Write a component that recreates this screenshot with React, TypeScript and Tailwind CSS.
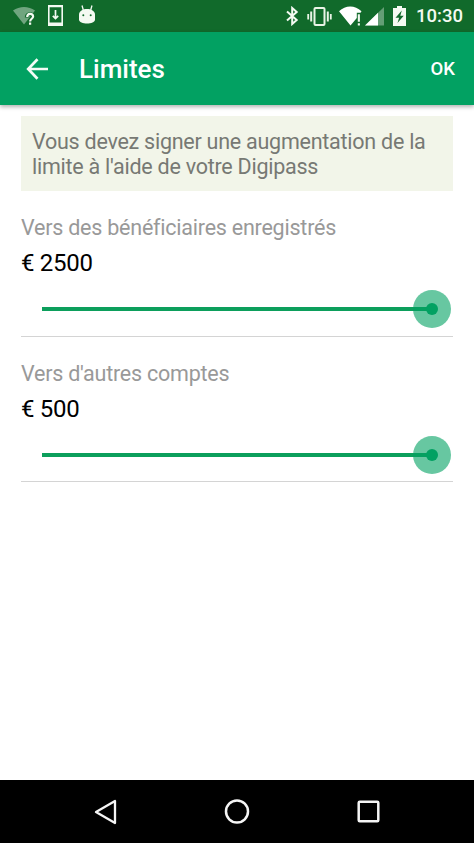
import React from "react";

const WifiUnknownIcon: React.FC = () => (
  <svg width="23" height="22" viewBox="0 0 23 22" fill="none">
    <path d="M0 5.5C6.500.8 15.500.8 22 5.500L11 19.500Z" fill="#fff" fillOpacity=".4" />
    <path
      d="M13.800 12.500c0-4.200 6.500-4.200 6.500-.8 0 2.300-3.100 2.500-3.100 5v3"
      stroke="#12692c"
      strokeWidth="4"
    />
    <path
      d="M14.200 12c0-4 5.900-4 5.900-.6 0 2.300-3 2.400-3 5M17.100 17.500v2.300"
      stroke="#f4faf2"
      strokeWidth="2.200"
    />
  </svg>
);

const DownloadIcon: React.FC = () => (
  <svg width="15" height="22" viewBox="0 0 15 22" fill="none">
    <path
      d="M0 0h15v21H0ZM1.600 2.200v15.200h11.800V2.200Z"
      fill="#f4faf2"
      fillRule="evenodd"
    />
    <path d="M7.500 5v8M4.800 10.800l2.700 2.700 2.700-2.700" stroke="#f4faf2" strokeWidth="1.700" />
  </svg>
);

const BotIcon: React.FC = () => (
  <svg width="16" height="20" viewBox="0 0 16 20" fill="none">
    <path d="M3 .5 4.300 5M13 .5 11.700 5" stroke="#f4faf2" strokeWidth="1.300" />
    <path
      d="M0 9.500C0 2 16 2 16 9.500V14.500c0 5.300-16 5.300-16 0Z"
      fill="#f4faf2"
    />
    <circle cx="4.300" cy="10.300" r="1" fill="#12692c" />
    <circle cx="11.700" cy="10.300" r="1" fill="#12692c" />
  </svg>
);

const BluetoothIcon: React.FC = () => (
  <svg width="13" height="20" viewBox="0 0 13 20" fill="none">
    <path
      d="M1 5.500 10.700 14 6.200 18V2l4.500 4L1 14.500"
      stroke="#f4faf2"
      strokeWidth="2"
    />
  </svg>
);

const VibrateIcon: React.FC = () => (
  <svg width="25" height="19" viewBox="0 0 25 19" fill="none" stroke="#e9f4e6">
    <rect x="7.500" y="1" width="10" height="17" rx="1" strokeWidth="2" />
    <path d="M4.200 4.500v10M20.800 4.500v10" strokeWidth="2" />
    <path d="M1.200 7v5.500M23.800 7v5.500" strokeWidth="1.800" />
  </svg>
);

const WifiAlertIcon: React.FC = () => (
  <svg width="23" height="20" viewBox="0 0 23 20">
    <path
      d="M0 5.300C6.500-1 16-1 22.500 5.300L21.500 6.800H17.800V12L11.500 19.500Z"
      fill="#fff"
    />
    <path d="M18.800 8.300h2.100v7.500h-2.100zM18.800 17.200h2.100v2.200h-2.100z" fill="#f4faf2" />
  </svg>
);

const SignalIcon: React.FC = () => (
  <svg width="19" height="19" viewBox="0 0 19 19">
    <path d="M0 18.500 19 0v18.500Z" fill="#fff" fillOpacity=".35" />
    <path d="M0 18.500 13 5.800v12.700Z" fill="#fff" />
  </svg>
);

const BatteryIcon: React.FC = () => (
  <svg width="13" height="20" viewBox="0 0 13 20">
    <path d="M4 0h5v2h4v18H0V2h4Z" fill="#f4faf2" />
    <path d="M8.800 4.500 2.500 11.800h3.600l-1.600 5.200L10.700 9.700H7.300Z" fill="#12692c" />
  </svg>
);

const StatusBar: React.FC = () => (
  <div className="flex h-8 items-start bg-[#116a2b] pr-[11px] pl-[13px] text-[#f4faf2]">
    <div className="flex flex-1 items-start pt-[5px]">
      <WifiUnknownIcon />
      <div className="ml-3">
        <DownloadIcon />
      </div>
      <div className="ml-4">
        <BotIcon />
      </div>
    </div>
    <div className="flex items-center pt-1.5">
      <BluetoothIcon />
      <div className="ml-2">
        <VibrateIcon />
      </div>
      <div className="ml-[7px]">
        <WifiAlertIcon />
      </div>
      <div className="ml-[3px]">
        <SignalIcon />
      </div>
      <div className="ml-[9px]">
        <BatteryIcon />
      </div>
      <span className="ml-2.5 w-[47px] text-[18.500px] leading-5 font-medium whitespace-nowrap">
        10:30
      </span>
    </div>
  </div>
);

const Header: React.FC = () => (
  <header className="z-10 flex h-[73px] items-center bg-[#02a162] pr-[19px] pl-[26px] text-white shadow-[0_2px_4px_rgba(0,0,0,0.3)]">
    <button aria-label="Retour">
      <svg width="22" height="22" viewBox="0 0 22 22" fill="none">
        <path d="M11.500 1.200 2.200 11l9.300 9.800M2.500 11H22" stroke="#f4fcf6" strokeWidth="2.700" />
      </svg>
    </button>
    <h1 className="ml-[31px] flex-1 pt-0.5 text-[26px] font-medium">Limites</h1>
    <button className="pt-0.5 text-[18.500px] font-medium">OK</button>
  </header>
);

interface LimitProps {
  label: string;
  amount: number;
}

const Limit: React.FC<LimitProps> = ({ label, amount }) => (
  <section className="mb-6 h-[121.500px] border-b border-[#d4d4d4]">
    <h2 className="text-[21.500px] leading-[25px] tracking-[-0.23px] text-[#999]">{label}</h2>
    <p className="mt-[9px] text-[24px] leading-7 tracking-[-0.3px] text-black">€ {amount}</p>
    <div className="mt-[13px] mr-0.5 ml-[21px] flex h-[38px] items-center">
      <div className="-mr-[19px] h-1 flex-1 bg-[#0c9f5c]" />
      <div className="flex size-[38px] items-center justify-center rounded-full bg-[#02a162]/60">
        <div className="size-3 rounded-full bg-[#02a162]" />
      </div>
    </div>
  </section>
);

const NavBar: React.FC = () => (
  <nav className="flex h-[63px] items-center justify-between bg-black px-[94px]">
    <svg width="24" height="26" viewBox="0 0 24 26" fill="none" stroke="#f5f5f5">
      <path d="M21 2v22L2 13Z" strokeWidth="2.300" strokeLinejoin="round" />
    </svg>
    <svg width="26" height="26" viewBox="0 0 26 26" fill="none" stroke="#f5f5f5">
      <circle cx="13" cy="12.500" r="11" strokeWidth="2.500" />
    </svg>
    <svg width="24" height="24" viewBox="0 0 24 24" fill="none" stroke="#f5f5f5">
      <rect x="2.700" y="1.700" width="19.600" height="19.600" rx="1" strokeWidth="2.500" />
    </svg>
  </nav>
);

export default function App() {
  const limits: LimitProps[] = [
    { label: "Vers des bénéficiaires enregistrés", amount: 2500 },
    { label: "Vers d'autres comptes", amount: 500 },
  ];

  return (
    <div className="flex h-screen w-full flex-col overflow-hidden bg-white font-[Roboto,sans-serif]">
      <StatusBar />
      <Header />
      <main className="flex-1 px-[21px] pt-[11px]">
        <div className="mb-6 h-[75px] bg-[#f2f5e9] py-[13px] pl-[11px] text-[21.500px] leading-[25px] tracking-[-0.25px] whitespace-nowrap text-[#777974]">
          Vous devez signer une augmentation de la
          <br />
          limite à l'aide de votre Digipass
        </div>
        {limits.map((limit) => (
          <Limit key={limit.label} label={limit.label} amount={limit.amount} />
        ))}
      </main>
      <NavBar />
    </div>
  );
}
